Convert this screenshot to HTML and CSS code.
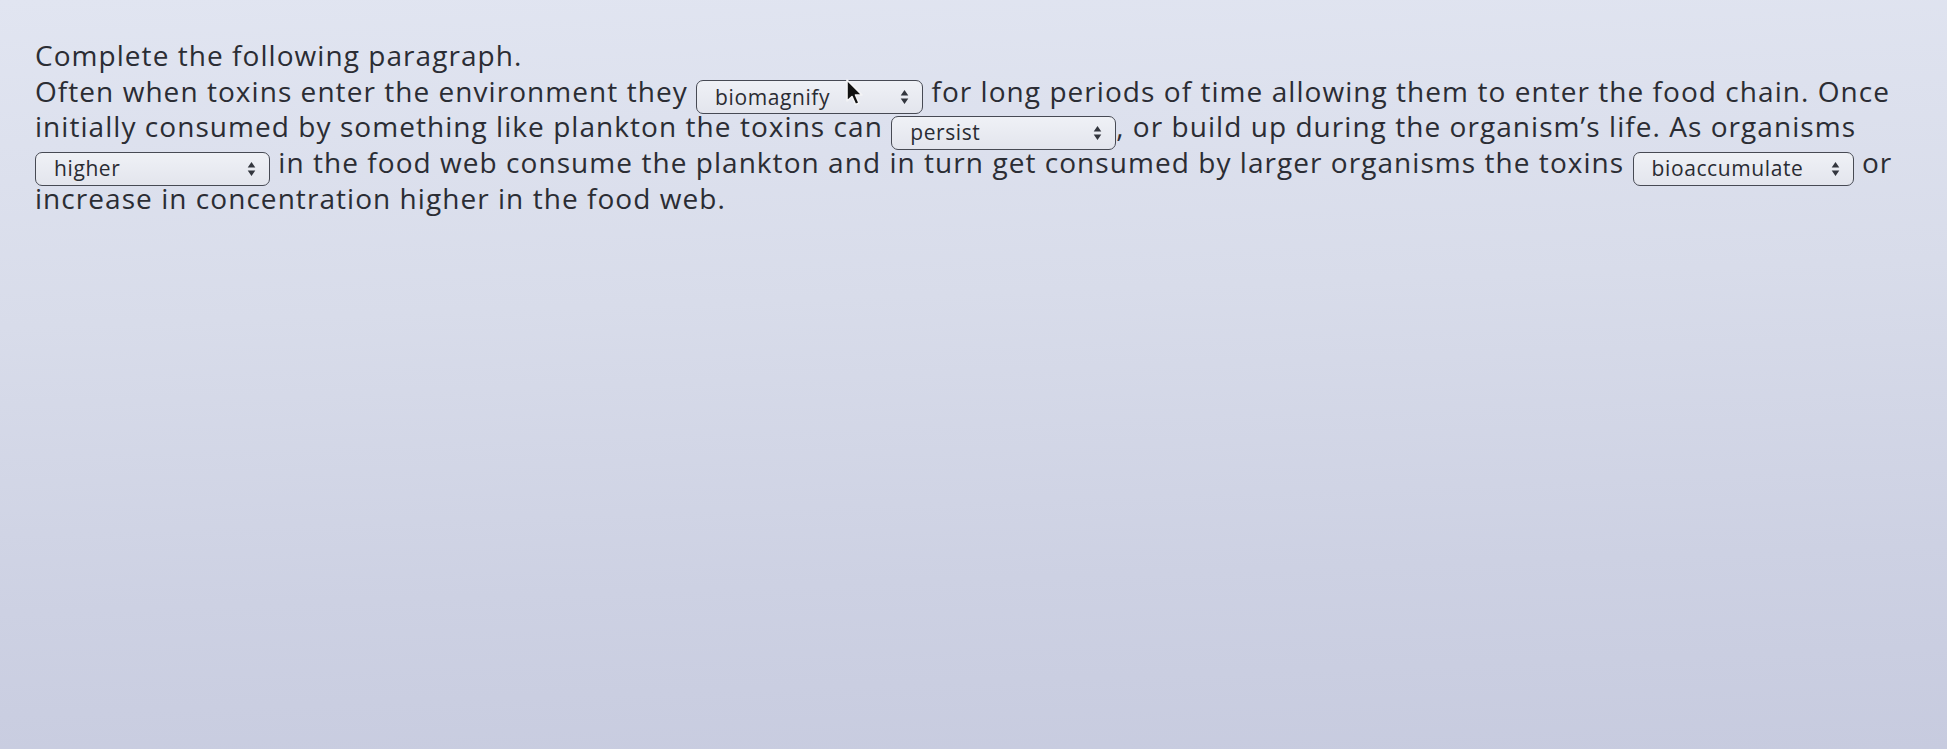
FILE: index.html
```html
<!DOCTYPE html>
<html lang="en">
<head>
<meta charset="utf-8">
<title>Complete the following paragraph</title>
<link rel="stylesheet" href="styles.css">
</head>
<body>
<main class="question">
  <p class="prompt">Complete the following paragraph.</p>
  <p class="para">Often when toxins enter the environment they <span class="dd dd-first"><span class="dd-label">biomagnify</span><svg class="dd-arrows" viewBox="0 0 9 16" width="9" height="16"><path d="M4.5 1 L8.3 6.4 L0.7 6.4 Z M4.5 15 L8.3 9.6 L0.7 9.6 Z"/></svg><svg class="cursor" viewBox="0 0 20 28" width="20" height="28"><path d="M2 1 L2 22 L7 17.5 L10.5 25.5 L14 24 L10.5 16 L17 16 Z" fill="#111" stroke="#f4f4f6" stroke-width="1.6" stroke-linejoin="round"/></svg></span> for long periods of time allowing them to enter the food chain. Once initially consumed by something like plankton the toxins can <span class="dd"><span class="dd-label">persist</span><svg class="dd-arrows" viewBox="0 0 9 16" width="9" height="16"><path d="M4.5 1 L8.3 6.4 L0.7 6.4 Z M4.5 15 L8.3 9.6 L0.7 9.6 Z"/></svg></span>, or build up during the organism’s life. As organisms <span class="dd dd-wide"><span class="dd-label">higher</span><svg class="dd-arrows" viewBox="0 0 9 16" width="9" height="16"><path d="M4.5 1 L8.3 6.4 L0.7 6.4 Z M4.5 15 L8.3 9.6 L0.7 9.6 Z"/></svg></span> in the food web consume the plankton and in turn get consumed by larger organisms the toxins <span class="dd dd-narrow"><span class="dd-label">bioaccumulate</span><svg class="dd-arrows" viewBox="0 0 9 16" width="9" height="16"><path d="M4.5 1 L8.3 6.4 L0.7 6.4 Z M4.5 15 L8.3 9.6 L0.7 9.6 Z"/></svg></span> or increase in concentration higher in the food web.</p>
</main>
</body>
</html>
```
FILE: styles.css
```css
html, body {
  margin: 0;
  height: 100%;
}
body {
  background: linear-gradient(178deg, #e1e5f1 0%, #d8dcea 40%, #cdd1e3 75%, #c7cbdf 100%);
  color: #2b2d34;
  font-family: "Open Sans", "Noto Sans", sans-serif;
}
.question {
  padding: 38px 0 0 35px;
  width: 1880px;
}
.prompt, .para {
  margin: 0;
  font-size: 28px;
  line-height: 35.7px;
  letter-spacing: 1.05px;
}
.dd {
  position: relative;
  top: 3px;
  display: inline-flex;
  align-items: center;
  justify-content: space-between;
  box-sizing: border-box;
  width: 225px;
  height: 34px;
  margin: -5px 0;
  padding: 0 13px 0 18px;
  border: 1.6px solid #474a54;
  border-radius: 7px;
  background: linear-gradient(#eff1f6, #e3e5ed);
  vertical-align: middle;
  font-size: 21px;
  letter-spacing: 0.6px;
  line-height: 1;
  color: #2a2c33;
}
.dd-first { width: 227px; }
.dd-wide { width: 235px; }
.dd-narrow { width: 221px; }
.dd-label {
  display: block;
}
.dd-arrows {
  fill: #33363e;
  flex: none;
}
.cursor {
  position: absolute;
  left: 148px;
  top: -2px;
}
```
